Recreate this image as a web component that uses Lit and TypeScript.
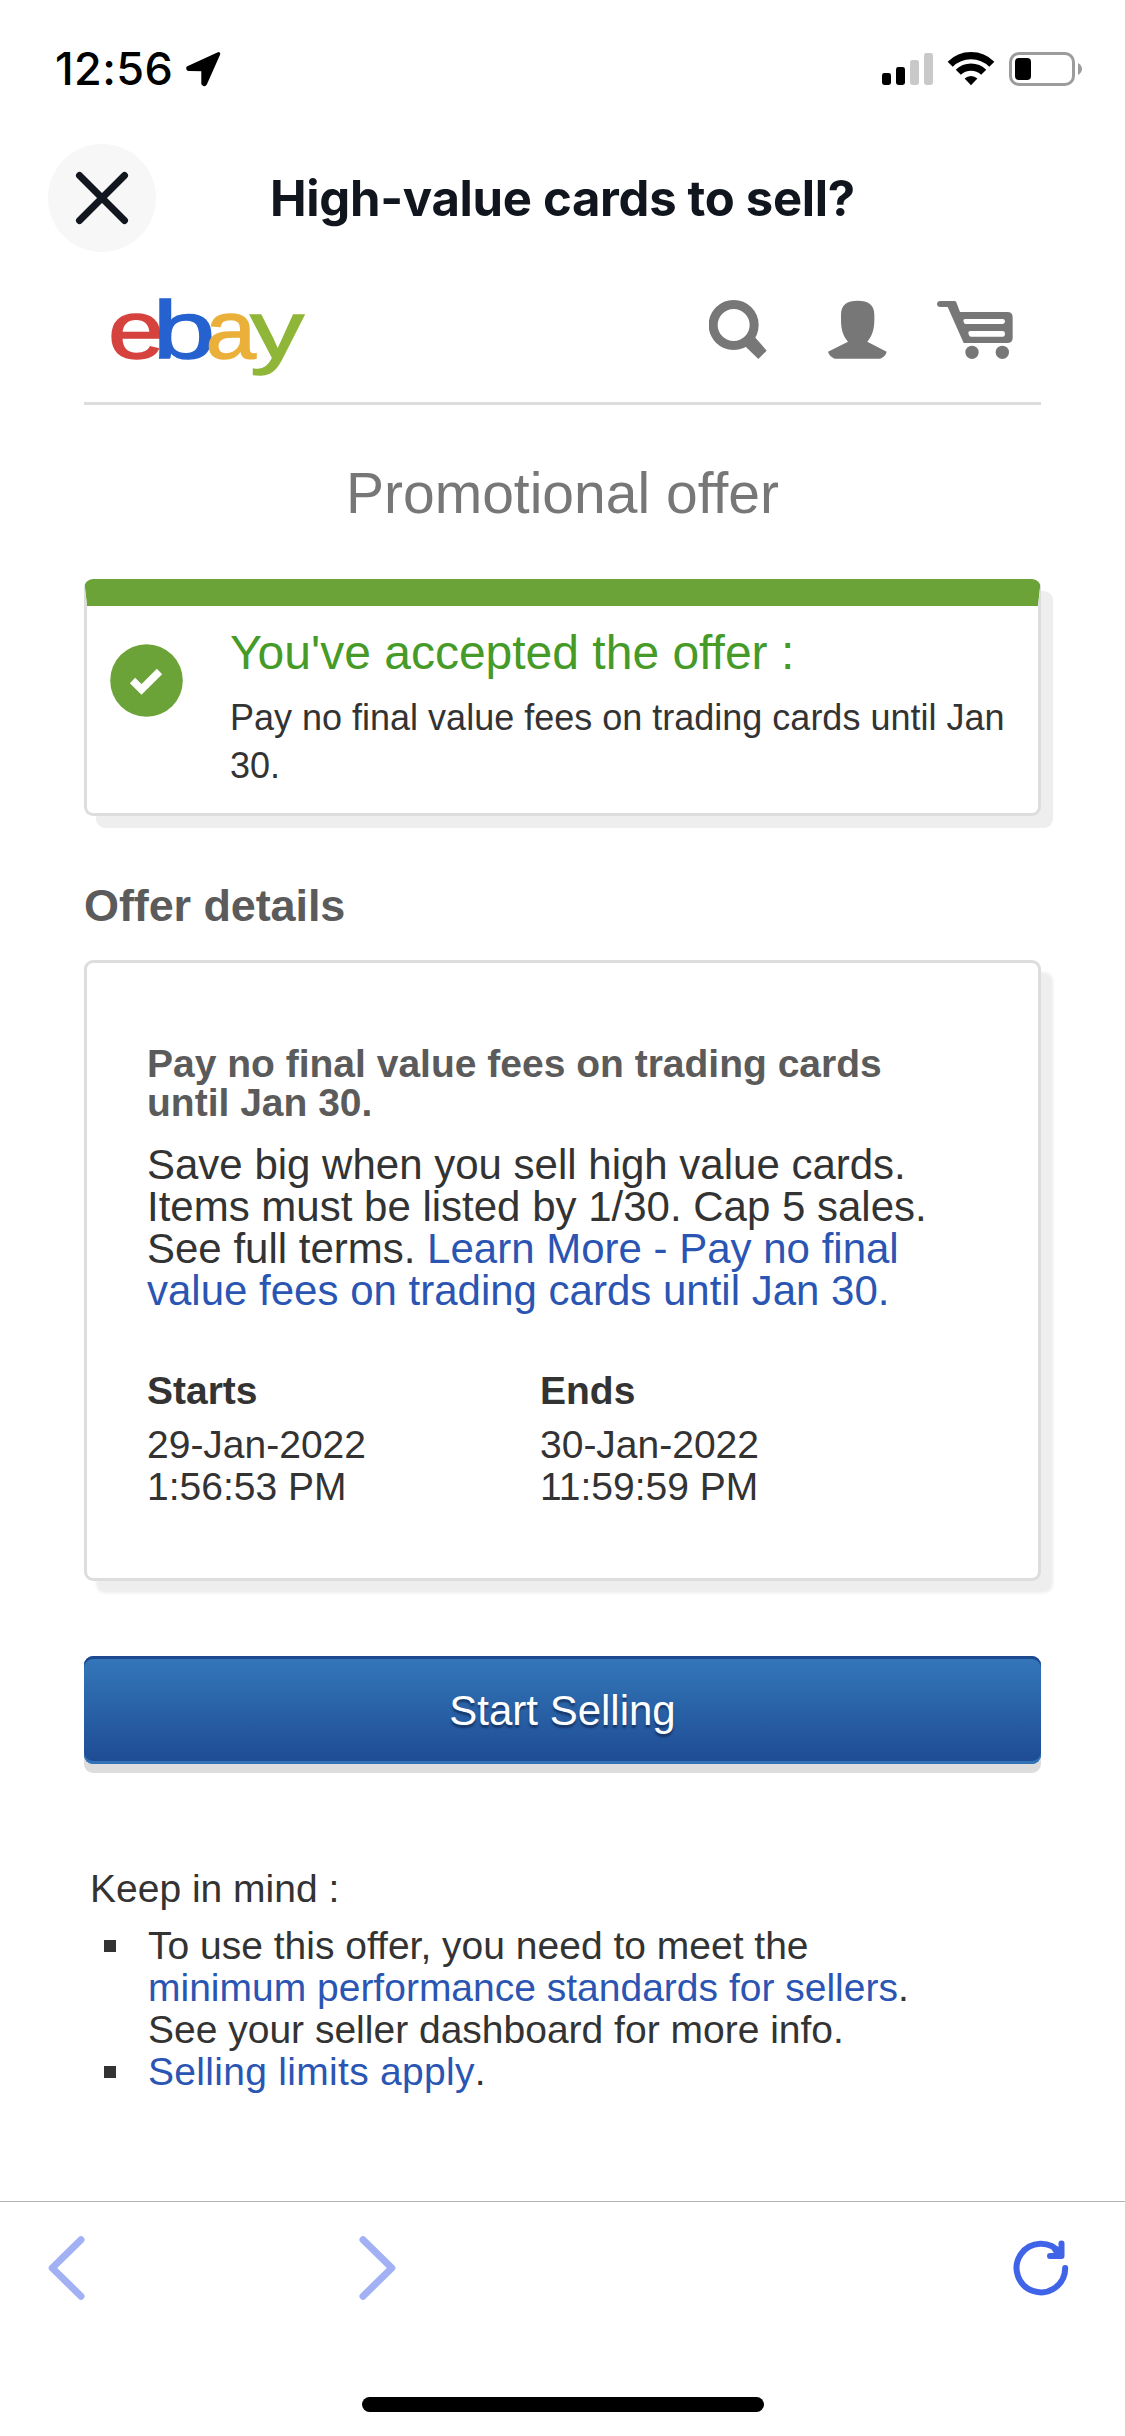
import { LitElement, html, css, svg } from "lit";
import { customElement } from "lit/decorators.js";

const sans = css`"Liberation Sans", Arial, Helvetica, sans-serif`;
const ui = css`Inter, "Liberation Sans", sans-serif`;

@customElement("status-bar")
class StatusBar extends LitElement {
  static styles = css`
    :host { display: flex; align-items: center; justify-content: space-between; height: 138px; padding: 0 43px 0 55px; box-sizing: border-box; }
    .left { display: flex; align-items: center; gap: 11px; }
    .time { font: 550 45px/54px ${ui}; letter-spacing: 0.4px; color: #000; }
    svg { display: block; }
  `;
  render() {
    return html`
      <div class="left">
        <span class="time">12:56</span>
        <svg width="38" height="38" viewBox="185 50.5 38 38">
          <path d="M219.6 54.3 L189 68.2 Q188.6 69.8 190 69.9 L204 70 L204 84 Q205.4 86 206.3 84.2 Z" fill="#000" stroke="#000" stroke-width="3.4" stroke-linejoin="round"/>
        </svg>
      </div>
      <svg width="200" height="36" viewBox="882 51 200 36">
        <rect x="882" y="73" width="9" height="12" rx="2.4"/>
        <rect x="896" y="67" width="9" height="18" rx="2.4"/>
        <rect x="910" y="60" width="9" height="25" rx="2.4" fill="#c9c9c9"/>
        <rect x="924" y="53" width="9" height="32" rx="2.4" fill="#c9c9c9"/>
        <g fill="none" stroke="#000" stroke-width="7.2">
          <path d="M950.2 64.2 A29.4 29.4 0 0 1 991.8 64.2"/>
          <path d="M958.3 72.3 A18 18 0 0 1 983.7 72.3"/>
        </g>
        <path d="M971 85.2 L964.6 78.6 A9.4 9.4 0 0 1 977.4 78.6 Z"/>
        <rect x="1010.5" y="53.5" width="63" height="31" rx="8.5" fill="none" stroke="#9c9c9c" stroke-width="3"/>
        <rect x="1015" y="58" width="16" height="22" rx="4"/>
        <path d="M1078 63 Q1082 65.5 1082 69 Q1082 72.500 1078 75 Z" fill="#9c9c9c"/>
      </svg>
    `;
  }
}

@customElement("sheet-header")
class SheetHeader extends LitElement {
  static styles = css`
    :host { display: grid; grid-template-columns: 108px 1fr 108px; align-items: center; height: 120px; padding: 0 48px; box-sizing: border-box; }
    .close { display: grid; place-items: center; width: 108px; height: 108px; border-radius: 50%; background: #f7f7f7; }
    .title { margin: 0; padding-top: 2px; text-align: center; white-space: nowrap; font: 700 49px/60px ${ui}; letter-spacing: -0.3px; color: #11151e; }
  `;
  render() {
    return html`
      <div class="close">
        <svg width="54" height="54" viewBox="0 0 54 54">
          <path d="M4.500 4.500 L49.500 49.500 M49.500 4.500 L4.500 49.500" stroke="#11161f" stroke-width="7" stroke-linecap="round"/>
        </svg>
      </div>
      <h1 class="title">High-value cards to sell?</h1>
    `;
  }
}

const logoLetters = [
  { ch: "e", x: -2, sx: 1.23, color: "#d6433f" },
  { ch: "b", x: 42.7, sx: 1.37, color: "#2662cf" },
  { ch: "a", x: 95.8, sx: 1.1, color: "#ebb03a" },
  { ch: "y", x: 140.2, sx: 1.31, color: "#8fb638" },
];

@customElement("site-header")
class SiteHeader extends LitElement {
  static styles = css`
    :host { display: flex; justify-content: space-between; align-items: flex-start; height: 147px; padding: 36px 28px 0 26px; box-sizing: border-box; border-bottom: 3px solid #dddddd; }
    .logo { font: 400 82px ${sans}; overflow: visible; }
    .tools { display: flex; gap: 61px; padding-top: 6px; }
    .cart { margin-left: -11px; }
    svg { display: block; }
  `;
  render() {
    return html`
      <svg class="logo" width="198" height="84" viewBox="0 -2 198 84">
        ${logoLetters.map(
          (l) => svg`<text transform="translate(${l.x} 62) scale(${l.sx} 1)" fill=${l.color} stroke=${l.color} stroke-width="1.5">${l.ch}</text>`
        )}
      </svg>
      <div class="tools">
        <svg width="58" height="59" viewBox="148 90 174 177">
          <circle cx="222" cy="165" r="61.500" fill="none" stroke="#777" stroke-width="27"/>
          <path d="M286 202 L321 242 L296 267 L258 230 Z" fill="#777"/>
        </svg>
        <svg width="59" height="59" viewBox="505 90 177 177">
          <path d="M594 92 C626 92 644 104 644 134 V150 C644 180 636 200 623 215 L681 245 C679 255 670 264 660 266 H527 C517 264 508 255 505 245 L565 215 C551 199 544 180 544 150 V134 C544 104 562 92 594 92 Z" fill="#777"/>
        </svg>
        <svg class="cart" width="76" height="59" viewBox="831 90 228 177">
          <path fill="#777" fill-rule="evenodd" d="M841 93 H883 Q887 93 889 97 L900 126 H1042 Q1058 126 1058 142 V203 Q1058 219 1042 219 H911 L863 111 H841 Q831 110 831 102 Q831 94 841 93 Z M915 147 Q910 148 910 152 L912 158 Q913 162 918 162 H1029 Q1035 161 1035 154 Q1035 148 1029 147 Z M930 183 Q924 184 925 189 L927 196 Q928 200 933 200 H1029 Q1035 199 1035 191 Q1035 184 1029 183 Z"/>
          <circle cx="936" cy="247" r="20" fill="#777"/>
          <circle cx="1027" cy="247" r="20" fill="#777"/>
        </svg>
      </div>
    `;
  }
}

@customElement("accepted-card")
class AcceptedCard extends LitElement {
  static styles = css`
    :host { display: flex; gap: 47px; height: 237px; box-sizing: border-box; padding: 20px 18px 0 23px; background: #fff; border: 3px solid #dddddd; border-top: 27px solid #6ca338; border-radius: 9px; box-shadow: 12px 12px 0 #eeeeee; font-family: ${sans}; }
    .badge { flex: none; margin-top: 18px; }
    .heading { margin: 0 0 14px; font-size: 48px; line-height: 54px; font-weight: 400; color: #459a28; }
    .text { margin: 0; font-size: 36px; line-height: 48px; color: #333; }
  `;
  render() {
    return html`
      <svg class="badge" width="73" height="73" viewBox="0 0 73 73">
        <circle cx="36.500" cy="36.500" r="36.300" fill="#6ca338"/>
        <path d="M22.500 36.500 L31.500 45.500 L49.500 27.500" fill="none" stroke="#fff" stroke-width="7.500"/>
      </svg>
      <div>
        <h3 class="heading">You've accepted the offer :</h3>
        <p class="text">Pay no final value fees on trading cards until Jan 30.</p>
      </div>
    `;
  }
}

const schedule = [
  { label: "Starts", date: "29-Jan-2022", time: "1:56:53 PM" },
  { label: "Ends", date: "30-Jan-2022", time: "11:59:59 PM" },
];

@customElement("offer-card")
class OfferCard extends LitElement {
  static styles = css`
    :host { display: block; height: 621px; box-sizing: border-box; padding: 81px 96px 0 60px; background: #fff; border: 3px solid #dddddd; border-radius: 9px; box-shadow: 12px 12px 3px #eeeeee; font-family: ${sans}; color: #333; }
    .title { margin: 0 0 22px; font-size: 39px; line-height: 39px; font-weight: 700; color: #5b5b5b; }
    .body { margin: 0; font-size: 42px; line-height: 42px; }
    .link { color: #2b55b2; text-decoration: none; }
    .dates { display: grid; grid-template-columns: 393px 1fr; margin-top: 58px; font-size: 39px; line-height: 42px; }
    .label { font-weight: 700; margin-bottom: 12px; }
  `;
  render() {
    return html`
      <h3 class="title">Pay no final value fees on trading cards until Jan 30.</h3>
      <p class="body">
        Save big when you sell high value cards. Items must be listed by 1/30. Cap 5 sales. See full terms.
        <a class="link">Learn More - Pay no final value fees on trading cards until Jan 30.</a>
      </p>
      <div class="dates">
        ${schedule.map(
          (s) => html`<div><div class="label">${s.label}</div><div>${s.date}</div><div>${s.time}</div></div>`
        )}
      </div>
    `;
  }
}

@customElement("keep-in-mind")
class KeepInMind extends LitElement {
  static styles = css`
    :host { display: block; font: 400 39px/42px ${sans}; color: #333; }
    .lead { margin: 0 0 15px 6px; }
    .list { margin: 0; padding: 0 0 0 20px; list-style: none; }
    .item { display: grid; grid-template-columns: 12px 790px; column-gap: 32px; }
    .mark { width: 12px; height: 12px; margin-top: 15px; background: #333; }
    .link { color: #2b55b2; }
    .tail { letter-spacing: 0.3px; }
  `;
  render() {
    return html`
      <p class="lead">Keep in mind :</p>
      <ul class="list">
        <li class="item"><span class="mark"></span><span>To use this offer, you need to meet the <a class="link">minimum performance standards for sellers</a>. See your seller dashboard for more info.</span></li>
        <li class="item"><span class="mark"></span><span><a class="link tail">Selling limits apply</a>.</span></li>
      </ul>
    `;
  }
}

@customElement("browser-toolbar")
class BrowserToolbar extends LitElement {
  static styles = css`
    :host { display: block; height: 235px; box-sizing: border-box; border-top: 1px solid #b2b2b2; background: #fff; }
    .row { display: flex; align-items: center; height: 132px; padding: 0 56px 0 46px; }
    .forward { margin-left: 272px; }
    .reload { margin-left: auto; }
    .home { width: 402px; height: 15px; margin: 63px auto 0; border-radius: 8px; background: #000; }
    svg { display: block; }
  `;
  render() {
    return html`
      <div class="row">
        <svg width="40" height="66" viewBox="0 0 40 66">
          <path d="M35 4.800 L6.200 33 L35 61.200" fill="none" stroke="#a1b1f4" stroke-width="7" stroke-linecap="round" stroke-linejoin="round"/>
        </svg>
        <svg class="forward" width="40" height="66" viewBox="0 0 40 66">
          <path d="M5 4.800 L33.800 33 L5 61.200" fill="none" stroke="#a1b1f4" stroke-width="7" stroke-linecap="round" stroke-linejoin="round"/>
        </svg>
        <svg class="reload" width="57" height="58" viewBox="1012 2239 57 58">
          <g fill="none" stroke="#4064e8" stroke-width="6" stroke-linecap="round" stroke-linejoin="round">
            <path d="M1065.200 2268 A24.300 24.300 0 1 1 1060 2253"/>
            <path d="M1061.500 2243.500 V2256 H1050"/>
            <path d="M1056 2250 L1060 2254" stroke-width="7"/>
          </g>
        </svg>
      </div>
      <div class="home"></div>
    `;
  }
}

@customElement("app-root")
class AppRoot extends LitElement {
  static styles = css`
    :host { display: flex; flex-direction: column; width: 1125px; height: 2436px; background: #fff; overflow: hidden; font-family: ${sans}; }
    .page { flex: 1; display: flex; flex-direction: column; padding: 0 84px; }
    .heading { margin: 58px 0 56px; text-align: center; font-size: 57px; line-height: 60px; font-weight: 400; color: #777; }
    .subhead { margin: 63px 0 27px; font-size: 45px; line-height: 54px; font-weight: 700; letter-spacing: -0.1px; color: #5b5b5b; }
    .cta { display: block; height: 108px; margin: 75px 0 104px; padding: 1px 0 0; border: 0; border-radius: 9px; background: linear-gradient(#3477ba, #2c68ac 35%, #1e4b94); box-shadow: inset 0 3px 0 #1d4a8e, inset 0 -3px 0 #3273b7, 0 9px 0 #dddddd; font: 400 42px/48px ${sans}; color: #fff; text-shadow: 0 3px 2px rgba(20, 40, 80, 0.7); }
  `;
  render() {
    return html`
      <status-bar></status-bar>
      <sheet-header></sheet-header>
      <main class="page">
        <site-header></site-header>
        <h2 class="heading">Promotional offer</h2>
        <accepted-card></accepted-card>
        <h2 class="subhead">Offer details</h2>
        <offer-card></offer-card>
        <button class="cta">Start Selling</button>
        <keep-in-mind></keep-in-mind>
      </main>
      <browser-toolbar></browser-toolbar>
    `;
  }
}
